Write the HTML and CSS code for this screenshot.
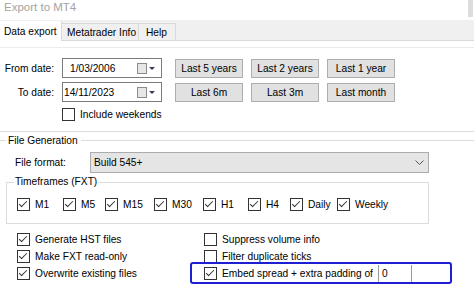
FILE: index.html
```html
<!DOCTYPE html>
<html lang="en">
<head>
    <meta charset="UTF-8">
    <title>Export to MT4</title>
    <link rel="stylesheet" href="styles.css">
</head>
<body>
<div class="titlebar">
    <span class="title">Export to MT4</span>
    <span class="thumb"></span>
</div>
<div class="tabs">
    <div class="tab tab-data active">Data export</div>
    <div class="tab tab-info">Metatrader Info</div>
    <div class="tab tab-help">Help</div>
</div>

<div class="panel">
    <div class="dates">
        <span class="date-label">From date:</span>
        <div class="date-input">
            <span class="date-value wide">1/03/2006</span>
            <span class="cal"></span><span class="drop"></span>
        </div>
        <button class="btn">Last 5 years</button>
        <button class="btn">Last 2 years</button>
        <button class="btn">Last 1 year</button>

        <span class="date-label">To date:</span>
        <div class="date-input">
            <span class="date-value">14/11/2023</span>
            <span class="cal"></span><span class="drop"></span>
        </div>
        <button class="btn">Last 6m</button>
        <button class="btn">Last 3m</button>
        <button class="btn">Last month</button>

        <label class="check weekends"><span class="cb"></span>Include weekends</label>
    </div>

    <div class="sep"></div>

    <div class="group-title">File Generation</div>

    <div class="format">
        <span class="format-label">File format:</span>
        <div class="select">
            <span>Build 545+</span>
            <svg class="chev" width="9" height="6" viewBox="0 0 9 6"><polyline points="0.5,0.5 4.5,4.5 8.5,0.5" fill="none" stroke="#555" stroke-width="1"/></svg>
        </div>
    </div>

    <fieldset class="frames">
        <legend>Timeframes (FXT)</legend>
        <div class="frame-row">
            <label class="check"><span class="cb on"></span>M1</label>
            <label class="check"><span class="cb on"></span>M5</label>
            <label class="check"><span class="cb on"></span>M15</label>
            <label class="check"><span class="cb on"></span>M30</label>
            <label class="check"><span class="cb on"></span>H1</label>
            <label class="check"><span class="cb on"></span>H4</label>
            <label class="check"><span class="cb on"></span>Daily</label>
            <label class="check"><span class="cb on"></span>Weekly</label>
        </div>
    </fieldset>

    <div class="options">
        <label class="check"><span class="cb on"></span>Generate HST files</label>
        <label class="check"><span class="cb"></span>Suppress volume info</label>
        <label class="check"><span class="cb on"></span>Make FXT read-only</label>
        <label class="check"><span class="cb"></span>Filter duplicate ticks</label>
        <label class="check"><span class="cb on"></span>Overwrite existing files</label>
        <div class="embed">
            <label class="check"><span class="cb on"></span>Embed spread + extra padding of</label>
            <span class="num">0</span>
        </div>
    </div>
</div>
</body>
</html>
```

FILE: styles.css
```css
body {
    margin: 0;
    min-height: 291px;
    background: #fff;
    font-family: "Liberation Sans", Arial, sans-serif;
    font-size: 10.2px;
    line-height: 13px;
    color: #000;
}

.titlebar {
    height: 20px;
    display: flex;
    justify-content: space-between;
}

.title {
    padding: 1px 0 0 4px;
    font-size: 11.5px;
    line-height: 13px;
    color: #a3a3a3;
}

.thumb {
    width: 5px;
    height: 17px;
    margin-right: 1px;
    background: #dcdcdc;
}

/* tab strip */
.tabs {
    height: 21px;
    box-sizing: border-box;
    display: flex;
    align-items: flex-end;
    background: #f0f0f0;
    border-bottom: 1px solid #d9d9d9;
}

.tab {
    height: 17px;
    line-height: 17px;
    box-sizing: border-box;
    border-right: 1px solid #d9d9d9;
    border-top: 1px solid #d9d9d9;
    white-space: nowrap;
}

.tab.active {
    height: 20px;
    line-height: 16px;
    padding-top: 3px;
    margin-bottom: -1px;
    background: #fff;
    border-top: 0;
}

.tab-data {
    width: 62px;
    padding-left: 4px;
}

.tab-info {
    width: 77px;
    padding-left: 5px;
}

.tab-help {
    width: 37px;
    padding-left: 7px;
}

.panel {
    margin-top: 6px;
    padding-bottom: 8px;
    border-top: 1px solid #ececec;
}

/* dates */
.dates {
    padding-top: 10px;
    display: grid;
    grid-template-columns: 54px 105px 68px 68px 68px;
    grid-template-rows: 20px 20px auto;
    column-gap: 8px;
    row-gap: 4px;
    align-items: center;
}

.date-label {
    text-align: right;
}

.date-input {
    width: 100px;
    height: 20px;
    box-sizing: border-box;
    border: 1px solid #7a7a7a;
    display: flex;
    align-items: center;
}

.date-value {
    padding-left: 1px;
}

.date-value.wide {
    padding-left: 7px;
}

.cal {
    margin-left: auto;
    width: 10px;
    height: 11px;
    box-sizing: border-box;
    border: 1px solid #8c8c8c;
    background: #e6e6e6;
}

.drop {
    margin: 0 6px 0 2px;
    width: 0;
    height: 0;
    border-left: 3px solid transparent;
    border-right: 3px solid transparent;
    border-top: 3px solid #3c3c50;
}

.btn {
    height: 19px;
    padding: 0;
    font: inherit;
    color: #000;
    background: #e1e1e1;
    border: 1px solid #adadad;
}

.weekends {
    grid-column: 2 / -1;
    margin-top: 2px;
    height: 13px;
}

/* checkbox */
.check {
    display: flex;
    align-items: center;
    gap: 5px;
    line-height: 13px;
    white-space: nowrap;
}

.cb {
    position: relative;
    flex: none;
    width: 13px;
    height: 13px;
    box-sizing: border-box;
    border: 1px solid #333;
    background: #fff;
}

.cb.on::after {
    content: "";
    position: absolute;
    left: 3px;
    top: 0px;
    width: 3px;
    height: 7px;
    border-right: 1px solid #333;
    border-bottom: 1px solid #333;
    transform: rotate(45deg);
}

.sep {
    margin-top: 10px;
    border-top: 1px solid #dcdcdc;
}

.group-title {
    margin-top: 2px;
    height: 13px;
    line-height: 13px;
    display: flex;
    align-items: center;
}

.group-title::before,
.group-title::after {
    content: "";
    height: 1px;
    background: #dcdcdc;
}

.group-title::before {
    width: 6px;
    margin-right: 2px;
}

.group-title::after {
    flex: 1;
    margin-left: 3px;
}

/* file format */
.format {
    margin-top: 5px;
    padding-left: 15px;
    display: flex;
    align-items: center;
}

.format-label {
    width: 75px;
}

.select {
    width: 339px;
    height: 21px;
    box-sizing: border-box;
    padding-left: 3px;
    display: flex;
    align-items: center;
    background: #e5e5e5;
    border: 1px solid #acacac;
}

.chev {
    margin-left: auto;
    margin-right: 4px;
}

/* timeframes */
.frames {
    margin: 2px 0 0 6px;
    width: 423px;
    box-sizing: border-box;
    padding: 9px 0 12px 7px;
    border: 1px solid #dcdcdc;
}

.frames legend {
    padding: 0 1px;
    line-height: 14px;
}

.frame-row {
    margin-left: 3px;
    display: grid;
    grid-template-columns: 46px 42px 49px 49px 45px 42px 47px auto;
}

/* options */
.options {
    margin-top: 7px;
    padding-left: 17px;
    display: grid;
    grid-template-columns: 187px auto;
    grid-auto-rows: 17px;
    align-items: center;
}

.embed {
    position: relative;
    display: flex;
    align-items: center;
}

/* highlight frame drawn over the row */
.embed::before {
    content: "";
    position: absolute;
    left: -14px;
    top: -3px;
    width: 262px;
    height: 22px;
    box-sizing: border-box;
    border: 2px solid #1e1ed2;
    border-radius: 3px;
    pointer-events: none;
}

.num {
    margin-left: 5px;
    width: 34px;
    height: 17px;
    box-sizing: border-box;
    padding-left: 3px;
    line-height: 17px;
    border-left: 1px solid #9a9a9a;
    border-right: 1px solid #9a9a9a;
}
```
